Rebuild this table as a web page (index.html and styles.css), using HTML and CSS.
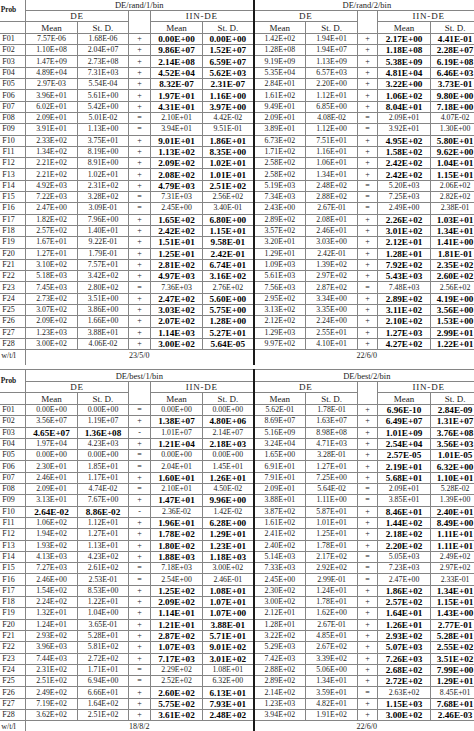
FILE: index.html
```html
<!DOCTYPE html>
<html>
<head>
<meta charset="utf-8">
<link rel="stylesheet" href="styles.css">
</head>
<body>
<div class="page">
<table class="t top">
<colgroup><col class="c1"><col class="c2"><col class="c3"><col class="c4"><col class="c5"><col class="c6"><col class="c7"><col class="c8"><col class="c9"><col class="c10"><col class="c11"></colgroup>
<tr class="h"><td rowspan="2" class="prob">Prob</td><td colspan="5" class="title">DE/rand/1/bin</td><td colspan="5" class="title div">DE/rand/2/bin</td></tr>
<tr class="h"><td colspan="2" class="alg">DE</td><td rowspan="2"></td><td colspan="2" class="alg">IIN-DE</td><td colspan="2" class="alg div">DE</td><td rowspan="2"></td><td colspan="2" class="alg">IIN-DE</td></tr>
<tr class="h"><td></td><td>Mean</td><td>St. D.</td><td>Mean</td><td>St. D.</td><td class="div">Mean</td><td>St. D.</td><td>Mean</td><td>St. D.</td></tr>
<tr><td class="f">F01</td><td>7.57E-06</td><td>1.68E-06</td><td class="s">+</td><td class="b">0.00E+00</td><td class="b">0.00E+00</td><td class="div">1.42E+02</td><td>1.94E+01</td><td class="s">+</td><td class="b">2.17E+00</td><td class="b">4.41E-01</td></tr>
<tr><td class="f">F02</td><td>1.10E+08</td><td>2.04E+07</td><td class="s">+</td><td class="b">9.86E+07</td><td class="b">1.52E+07</td><td class="div">1.28E+08</td><td>1.94E+07</td><td class="s">+</td><td class="b">1.18E+08</td><td class="b">2.28E+07</td></tr>
<tr><td class="f">F03</td><td>1.47E+09</td><td>2.73E+08</td><td class="s">+</td><td class="b">2.14E+08</td><td class="b">6.59E+07</td><td class="div">9.19E+09</td><td>1.13E+09</td><td class="s">+</td><td class="b">5.38E+09</td><td class="b">6.19E+08</td></tr>
<tr><td class="f">F04</td><td>4.89E+04</td><td>7.31E+03</td><td class="s">+</td><td class="b">4.52E+04</td><td class="b">5.62E+03</td><td class="div">5.35E+04</td><td>6.57E+03</td><td class="s">+</td><td class="b">4.81E+04</td><td class="b">6.46E+03</td></tr>
<tr><td class="f">F05</td><td>2.97E-03</td><td>5.54E-04</td><td class="s">+</td><td class="b">8.32E-07</td><td class="b">2.31E-07</td><td class="div">2.84E+01</td><td>2.20E+00</td><td class="s">+</td><td class="b">3.22E+00</td><td class="b">3.73E-01</td></tr>
<tr><td class="f">F06</td><td>3.96E+01</td><td>5.61E+00</td><td class="s">+</td><td class="b">1.97E+01</td><td class="b">1.16E+00</td><td class="div">1.61E+02</td><td>1.12E+01</td><td class="s">+</td><td class="b">1.06E+02</td><td class="b">9.80E+00</td></tr>
<tr><td class="f">F07</td><td>6.02E+01</td><td>5.42E+00</td><td class="s">+</td><td class="b">4.31E+01</td><td class="b">3.97E+00</td><td class="div">9.49E+01</td><td>6.85E+00</td><td class="s">+</td><td class="b">8.04E+01</td><td class="b">7.18E+00</td></tr>
<tr><td class="f">F08</td><td>2.09E+01</td><td>5.01E-02</td><td class="s">=</td><td>2.10E+01</td><td>4.42E-02</td><td class="div">2.09E+01</td><td>4.08E-02</td><td class="s">=</td><td>2.09E+01</td><td>4.07E-02</td></tr>
<tr><td class="f">F09</td><td>3.91E+01</td><td>1.13E+00</td><td class="s">=</td><td>3.94E+01</td><td>9.51E-01</td><td class="div">3.89E+01</td><td>1.12E+00</td><td class="s">=</td><td>3.92E+01</td><td>1.30E+00</td></tr>
<tr><td class="f">F10</td><td>2.33E+02</td><td>3.75E+01</td><td class="s">+</td><td class="b">9.01E+01</td><td class="b">1.86E+01</td><td class="div">6.73E+02</td><td>7.51E+01</td><td class="s">+</td><td class="b">4.95E+02</td><td class="b">5.80E+01</td></tr>
<tr><td class="f">F11</td><td>1.34E+02</td><td>8.19E+00</td><td class="s">+</td><td class="b">1.13E+02</td><td class="b">8.35E+00</td><td class="div">1.71E+02</td><td>1.16E+01</td><td class="s">+</td><td class="b">1.58E+02</td><td class="b">9.62E+00</td></tr>
<tr><td class="f">F12</td><td>2.21E+02</td><td>8.91E+00</td><td class="s">+</td><td class="b">2.09E+02</td><td class="b">1.02E+01</td><td class="div">2.58E+02</td><td>1.06E+01</td><td class="s">+</td><td class="b">2.42E+02</td><td class="b">1.04E+01</td></tr>
<tr><td class="f">F13</td><td>2.21E+02</td><td>1.02E+01</td><td class="s">+</td><td class="b">2.08E+02</td><td class="b">1.01E+01</td><td class="div">2.58E+02</td><td>1.34E+01</td><td class="s">+</td><td class="b">2.42E+02</td><td class="b">1.15E+01</td></tr>
<tr><td class="f">F14</td><td>4.92E+03</td><td>2.31E+02</td><td class="s">+</td><td class="b">4.79E+03</td><td class="b">2.51E+02</td><td class="div">5.19E+03</td><td>2.48E+02</td><td class="s">=</td><td>5.20E+03</td><td>2.06E+02</td></tr>
<tr><td class="f">F15</td><td>7.22E+03</td><td>3.28E+02</td><td class="s">=</td><td>7.31E+03</td><td>2.56E+02</td><td class="div">7.34E+03</td><td>2.88E+02</td><td class="s">=</td><td>7.25E+03</td><td>2.82E+02</td></tr>
<tr><td class="f">F16</td><td>2.47E+00</td><td>3.09E-01</td><td class="s">=</td><td>2.45E+00</td><td>3.40E-01</td><td class="div">2.43E+00</td><td>2.67E-01</td><td class="s">=</td><td>2.49E+00</td><td>2.38E-01</td></tr>
<tr><td class="f">F17</td><td>1.82E+02</td><td>7.96E+00</td><td class="s">+</td><td class="b">1.65E+02</td><td class="b">6.80E+00</td><td class="div">2.89E+02</td><td>2.08E+01</td><td class="s">+</td><td class="b">2.26E+02</td><td class="b">1.03E+01</td></tr>
<tr><td class="f">F18</td><td>2.57E+02</td><td>1.40E+01</td><td class="s">+</td><td class="b">2.42E+02</td><td class="b">1.15E+01</td><td class="div">3.57E+02</td><td>2.46E+01</td><td class="s">+</td><td class="b">3.01E+02</td><td class="b">1.34E+01</td></tr>
<tr><td class="f">F19</td><td>1.67E+01</td><td>9.22E-01</td><td class="s">+</td><td class="b">1.51E+01</td><td class="b">9.58E-01</td><td class="div">3.20E+01</td><td>3.03E+00</td><td class="s">+</td><td class="b">2.12E+01</td><td class="b">1.41E+00</td></tr>
<tr><td class="f">F20</td><td>1.27E+01</td><td>1.79E-01</td><td class="s">+</td><td class="b">1.25E+01</td><td class="b">2.42E-01</td><td class="div">1.29E+01</td><td>2.42E-01</td><td class="s">+</td><td class="b">1.28E+01</td><td class="b">1.81E-01</td></tr>
<tr><td class="f">F21</td><td>3.10E+02</td><td>7.57E+01</td><td class="s">+</td><td class="b">2.81E+02</td><td class="b">6.74E+01</td><td class="div">1.09E+03</td><td>1.39E+02</td><td class="s">+</td><td class="b">7.92E+02</td><td class="b">2.35E+02</td></tr>
<tr><td class="f">F22</td><td>5.18E+03</td><td>3.42E+02</td><td class="s">+</td><td class="b">4.97E+03</td><td class="b">3.16E+02</td><td class="div">5.61E+03</td><td>2.97E+02</td><td class="s">+</td><td class="b">5.43E+03</td><td class="b">2.60E+02</td></tr>
<tr><td class="f">F23</td><td>7.45E+03</td><td>2.80E+02</td><td class="s">=</td><td>7.36E+03</td><td>2.76E+02</td><td class="div">7.56E+03</td><td>2.87E+02</td><td class="s">=</td><td>7.48E+03</td><td>2.56E+02</td></tr>
<tr><td class="f">F24</td><td>2.73E+02</td><td>3.51E+00</td><td class="s">+</td><td class="b">2.47E+02</td><td class="b">5.60E+00</td><td class="div">2.95E+02</td><td>3.34E+00</td><td class="s">+</td><td class="b">2.89E+02</td><td class="b">4.19E+00</td></tr>
<tr><td class="f">F25</td><td>3.07E+02</td><td>3.86E+00</td><td class="s">+</td><td class="b">3.03E+02</td><td class="b">5.75E+00</td><td class="div">3.13E+02</td><td>3.35E+00</td><td class="s">+</td><td class="b">3.11E+02</td><td class="b">3.56E+00</td></tr>
<tr><td class="f">F26</td><td>2.09E+02</td><td>1.66E+00</td><td class="s">+</td><td class="b">2.07E+02</td><td class="b">1.28E+00</td><td class="div">2.12E+02</td><td>2.24E+00</td><td class="s">+</td><td class="b">2.10E+02</td><td class="b">1.53E+00</td></tr>
<tr><td class="f">F27</td><td>1.23E+03</td><td>3.88E+01</td><td class="s">+</td><td class="b">1.14E+03</td><td class="b">5.27E+01</td><td class="div">1.29E+03</td><td>2.55E+01</td><td class="s">+</td><td class="b">1.27E+03</td><td class="b">2.99E+01</td></tr>
<tr><td class="f">F28</td><td>3.00E+02</td><td>4.06E-02</td><td class="s">+</td><td class="b">3.00E+02</td><td class="b">5.64E-05</td><td class="div">9.97E+02</td><td>4.10E+01</td><td class="s">+</td><td class="b">4.27E+02</td><td class="b">1.22E+01</td></tr>
<tr class="w"><td>w/t/l</td><td colspan="5">23/5/0</td><td colspan="5" class="div">22/6/0</td></tr>
</table>

<table class="t bottom">
<colgroup><col class="c1"><col class="c2"><col class="c3"><col class="c4"><col class="c5"><col class="c6"><col class="c7"><col class="c8"><col class="c9"><col class="c10"><col class="c11"></colgroup>
<tr class="h"><td rowspan="2" class="prob">Prob</td><td colspan="5" class="title">DE/best/1/bin</td><td colspan="5" class="title div">DE/best/2/bin</td></tr>
<tr class="h"><td colspan="2" class="alg">DE</td><td rowspan="2"></td><td colspan="2" class="alg">IIN-DE</td><td colspan="2" class="alg div">DE</td><td rowspan="2"></td><td colspan="2" class="alg">IIN-DE</td></tr>
<tr class="h"><td></td><td>Mean</td><td>St. D.</td><td>Mean</td><td>St. D.</td><td class="div">Mean</td><td>St. D.</td><td>Mean</td><td>St. D.</td></tr>
<tr><td class="f">F01</td><td>0.00E+00</td><td>0.00E+00</td><td class="s">=</td><td>0.00E+00</td><td>0.00E+00</td><td class="div">5.62E-01</td><td>1.78E-01</td><td class="s">+</td><td class="b">6.96E-10</td><td class="b">2.84E-09</td></tr>
<tr><td class="f">F02</td><td>3.56E+07</td><td>1.19E+07</td><td class="s">+</td><td class="b">1.38E+07</td><td class="b">4.80E+06</td><td class="div">8.69E+07</td><td>1.63E+07</td><td class="s">+</td><td class="b">6.49E+07</td><td class="b">1.31E+07</td></tr>
<tr><td class="f">F03</td><td class="b">4.65E+07</td><td class="b">1.36E+08</td><td class="s">-</td><td>1.01E+07</td><td>2.14E+07</td><td class="div">5.16E+09</td><td>8.98E+08</td><td class="s">+</td><td class="b">1.01E+09</td><td class="b">3.76E+08</td></tr>
<tr><td class="f">F04</td><td>1.97E+04</td><td>4.23E+03</td><td class="s">+</td><td class="b">1.21E+04</td><td class="b">2.18E+03</td><td class="div">3.24E+04</td><td>4.71E+03</td><td class="s">+</td><td class="b">2.54E+04</td><td class="b">3.56E+03</td></tr>
<tr><td class="f">F05</td><td>0.00E+00</td><td>0.00E+00</td><td class="s">=</td><td>0.00E+00</td><td>0.00E+00</td><td class="div">1.65E+00</td><td>3.28E-01</td><td class="s">+</td><td class="b">2.57E-05</td><td class="b">1.01E-05</td></tr>
<tr><td class="f">F06</td><td>2.30E+01</td><td>1.85E+01</td><td class="s">=</td><td>2.04E+01</td><td>1.45E+01</td><td class="div">6.91E+01</td><td>1.27E+01</td><td class="s">+</td><td class="b">2.19E+01</td><td class="b">6.32E+00</td></tr>
<tr><td class="f">F07</td><td>2.46E+01</td><td>1.17E+01</td><td class="s">+</td><td class="b">1.60E+01</td><td class="b">1.26E+01</td><td class="div">7.91E+01</td><td>7.25E+00</td><td class="s">+</td><td class="b">5.68E+01</td><td class="b">1.10E+01</td></tr>
<tr><td class="f">F08</td><td>2.09E+01</td><td>4.74E-02</td><td class="s">=</td><td>2.10E+01</td><td>4.50E-02</td><td class="div">2.09E+01</td><td>5.64E-02</td><td class="s">=</td><td>2.09E+01</td><td>5.28E-02</td></tr>
<tr><td class="f">F09</td><td>3.13E+01</td><td>7.67E+00</td><td class="s">+</td><td class="b">1.47E+01</td><td class="b">9.96E+00</td><td class="div">3.88E+01</td><td>1.11E+00</td><td class="s">=</td><td>3.85E+01</td><td>1.39E+00</td></tr>
<tr><td class="f">F10</td><td class="b">2.64E-02</td><td class="b">8.86E-02</td><td class="s">-</td><td>2.36E-02</td><td>1.42E-02</td><td class="div">3.87E+02</td><td>5.87E+01</td><td class="s">+</td><td class="b">8.46E+01</td><td class="b">2.40E+01</td></tr>
<tr><td class="f">F11</td><td>1.06E+02</td><td>1.12E+01</td><td class="s">+</td><td class="b">1.96E+01</td><td class="b">6.28E+00</td><td class="div">1.61E+02</td><td>1.01E+01</td><td class="s">+</td><td class="b">1.44E+02</td><td class="b">8.49E+00</td></tr>
<tr><td class="f">F12</td><td>1.94E+02</td><td>1.27E+01</td><td class="s">+</td><td class="b">1.78E+02</td><td class="b">1.29E+01</td><td class="div">2.41E+02</td><td>1.25E+01</td><td class="s">+</td><td class="b">2.18E+02</td><td class="b">1.11E+01</td></tr>
<tr><td class="f">F13</td><td>1.93E+02</td><td>1.13E+01</td><td class="s">+</td><td class="b">1.80E+02</td><td class="b">1.23E+01</td><td class="div">2.40E+02</td><td>1.78E+01</td><td class="s">+</td><td class="b">2.20E+02</td><td class="b">1.11E+01</td></tr>
<tr><td class="f">F14</td><td>4.13E+03</td><td>4.23E+02</td><td class="s">+</td><td class="b">1.88E+03</td><td class="b">1.18E+03</td><td class="div">5.14E+03</td><td>2.17E+02</td><td class="s">=</td><td>5.05E+03</td><td>2.49E+02</td></tr>
<tr><td class="f">F15</td><td>7.27E+03</td><td>2.61E+02</td><td class="s">=</td><td>7.18E+03</td><td>3.00E+02</td><td class="div">7.33E+03</td><td>2.92E+02</td><td class="s">=</td><td>7.23E+03</td><td>2.97E+02</td></tr>
<tr><td class="f">F16</td><td>2.46E+00</td><td>2.53E-01</td><td class="s">=</td><td>2.54E+00</td><td>2.46E-01</td><td class="div">2.45E+00</td><td>2.99E-01</td><td class="s">=</td><td>2.47E+00</td><td>2.33E-01</td></tr>
<tr><td class="f">F17</td><td>1.54E+02</td><td>8.53E+00</td><td class="s">+</td><td class="b">1.25E+02</td><td class="b">1.08E+01</td><td class="div">2.30E+02</td><td>1.24E+01</td><td class="s">+</td><td class="b">1.86E+02</td><td class="b">1.34E+01</td></tr>
<tr><td class="f">F18</td><td>2.24E+02</td><td>1.22E+01</td><td class="s">+</td><td class="b">2.09E+02</td><td class="b">1.07E+01</td><td class="div">3.00E+02</td><td>1.78E+01</td><td class="s">+</td><td class="b">2.57E+02</td><td class="b">1.15E+01</td></tr>
<tr><td class="f">F19</td><td>1.32E+01</td><td>1.04E+00</td><td class="s">+</td><td class="b">1.14E+01</td><td class="b">1.07E+00</td><td class="div">2.12E+01</td><td>1.62E+00</td><td class="s">+</td><td class="b">1.64E+01</td><td class="b">1.43E+00</td></tr>
<tr><td class="f">F20</td><td>1.24E+01</td><td>3.65E-01</td><td class="s">+</td><td class="b">1.21E+01</td><td class="b">3.88E-01</td><td class="div">1.28E+01</td><td>2.67E-01</td><td class="s">+</td><td class="b">1.26E+01</td><td class="b">2.77E-01</td></tr>
<tr><td class="f">F21</td><td>2.93E+02</td><td>5.28E+01</td><td class="s">+</td><td class="b">2.87E+02</td><td class="b">5.71E+01</td><td class="div">3.22E+02</td><td>4.85E+01</td><td class="s">+</td><td class="b">2.93E+02</td><td class="b">5.28E+01</td></tr>
<tr><td class="f">F22</td><td>3.96E+03</td><td>5.81E+02</td><td class="s">+</td><td class="b">1.07E+03</td><td class="b">9.01E+02</td><td class="div">5.29E+03</td><td>2.67E+02</td><td class="s">+</td><td class="b">5.07E+03</td><td class="b">2.55E+02</td></tr>
<tr><td class="f">F23</td><td>7.44E+03</td><td>2.72E+02</td><td class="s">+</td><td class="b">7.17E+03</td><td class="b">3.01E+02</td><td class="div">7.42E+03</td><td>3.39E+02</td><td class="s">+</td><td class="b">7.26E+03</td><td class="b">3.51E+02</td></tr>
<tr><td class="f">F24</td><td>2.31E+02</td><td>1.71E+01</td><td class="s">=</td><td>2.29E+02</td><td>1.08E+01</td><td class="div">2.88E+02</td><td>5.06E+00</td><td class="s">+</td><td class="b">2.68E+02</td><td class="b">7.99E+00</td></tr>
<tr><td class="f">F25</td><td>2.51E+02</td><td>6.94E+00</td><td class="s">=</td><td>2.52E+02</td><td>6.32E+00</td><td class="div">2.89E+02</td><td>1.34E+01</td><td class="s">+</td><td class="b">2.72E+02</td><td class="b">1.29E+01</td></tr>
<tr><td class="f">F26</td><td>2.49E+02</td><td>6.66E+01</td><td class="s">+</td><td class="b">2.60E+02</td><td class="b">6.13E+01</td><td class="div">2.14E+02</td><td>3.59E+01</td><td class="s">=</td><td>2.63E+02</td><td>8.45E+01</td></tr>
<tr><td class="f">F27</td><td>7.19E+02</td><td>1.64E+02</td><td class="s">+</td><td class="b">5.75E+02</td><td class="b">7.93E+01</td><td class="div">1.23E+03</td><td>4.82E+01</td><td class="s">+</td><td class="b">1.15E+03</td><td class="b">7.68E+01</td></tr>
<tr><td class="f">F28</td><td>3.62E+02</td><td>2.51E+02</td><td class="s">+</td><td class="b">3.61E+02</td><td class="b">2.48E+02</td><td class="div">3.94E+02</td><td>1.91E+02</td><td class="s">+</td><td class="b">3.00E+02</td><td class="b">2.46E-03</td></tr>
<tr class="w"><td>w/t/l</td><td colspan="5">18/8/2</td><td colspan="5" class="div">22/6/0</td></tr>
</table>
</div>
</body>
</html>
```

FILE: styles.css
```css
html, body {
  margin: 0;
  padding: 0;
  background: #ffffff;
}
body {
  width: 474px;
  height: 731px;
  overflow: hidden;
}
.page {
  margin-left: -9px;
  width: 488px;
  padding-top: 0.1px;
}
.t {
  border-collapse: collapse;
  table-layout: fixed;
  width: 488px;
  font-family: "Liberation Serif", "Times New Roman", serif;
  color: #222222;
}
.t.top { margin-top: -2px; }
.t.bottom { margin-top: 4px; }
.c1 { width: 34px; }
.c2 { width: 52px; }
.c3 { width: 51px; }
.c4 { width: 22px; }
.c5 { width: 52px; }
.c6 { width: 51px; }
.c7 { width: 52px; }
.c8 { width: 52px; }
.c9 { width: 20px; }
.c10 { width: 53px; }
.c11 { width: 49px; }
.t td {
  border: 1px solid #858585;
  padding: 0;
  text-align: center;
  vertical-align: middle;
  height: 10.3px;
  line-height: 10px;
  font-size: 7.8px;
  white-space: nowrap;
  overflow: hidden;
}
.t .h td {
  height: 10.6px;
  font-size: 9px;
}
.t .h td.title {
  font-size: 8.5px;
  line-height: 9px;
  vertical-align: bottom;
}
.t .h td.alg { letter-spacing: 0.8px; }
.t .h td.prob { font-size: 7.4px; font-weight: bold; color: #1a1a1a; }
.t td.div { border-left: 2px solid #1a1a1a; }
.t td.b {
  font-weight: bold;
  font-size: 9.2px;
  color: #000000;
}
.t td.s { font-size: 8px; }
.t td.f { font-size: 8px; }
.t .w td {
  border-bottom: 0 none;
  height: 15px;
  vertical-align: top;
  font-size: 8px;
  line-height: 12px;
}
```
